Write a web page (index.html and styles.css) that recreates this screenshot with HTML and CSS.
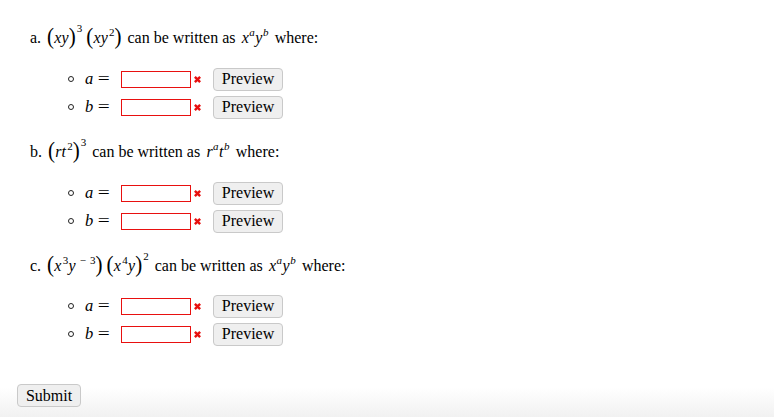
FILE: index.html
```html
<!DOCTYPE html>
<html>
<head>
<meta charset="utf-8">
<link rel="stylesheet" href="styles.css">
</head>
<body>
<div class="page">
  <div class="q">
    <div class="title">a. <span class="math"><span class="bp">(</span><i>xy</i><span class="bp">)</span><sup class="hi">3</sup> <span class="bp">(</span><i>xy</i><sup>2</sup><span class="bp">)</span></span> can be written as <span class="math tgt"><i>x</i><sup><i>a</i></sup><i>y</i><sup><i>b</i></sup></span> where:</div>
    <ul class="rows">
      <li class="row"><span class="bullet"></span><i class="var">a</i><span class="eq">=</span><input class="ans" type="text"><svg class="x" viewBox="0 0 8 8"><path d="M1 1L7 7M7 1L1 7" stroke="#e8100f" stroke-width="2.8"/></svg><button class="btn">Preview</button></li>
      <li class="row"><span class="bullet"></span><i class="var">b</i><span class="eq">=</span><input class="ans" type="text"><svg class="x" viewBox="0 0 8 8"><path d="M1 1L7 7M7 1L1 7" stroke="#e8100f" stroke-width="2.8"/></svg><button class="btn">Preview</button></li>
    </ul>
  </div>
  <div class="q">
    <div class="title">b. <span class="math"><span class="bp">(</span><i>rt</i><sup>2</sup><span class="bp">)</span><sup class="hi">3</sup></span> can be written as <span class="math tgt"><i>r</i><sup><i>a</i></sup><i>t</i><sup><i>b</i></sup></span> where:</div>
    <ul class="rows">
      <li class="row"><span class="bullet"></span><i class="var">a</i><span class="eq">=</span><input class="ans" type="text"><svg class="x" viewBox="0 0 8 8"><path d="M1 1L7 7M7 1L1 7" stroke="#e8100f" stroke-width="2.8"/></svg><button class="btn">Preview</button></li>
      <li class="row"><span class="bullet"></span><i class="var">b</i><span class="eq">=</span><input class="ans" type="text"><svg class="x" viewBox="0 0 8 8"><path d="M1 1L7 7M7 1L1 7" stroke="#e8100f" stroke-width="2.8"/></svg><button class="btn">Preview</button></li>
    </ul>
  </div>
  <div class="q">
    <div class="title">c. <span class="math"><span class="bp">(</span><i>x</i><sup>3</sup><i>y</i><sup><span class="minus">&minus;</span>3</sup><span class="bp">)</span> <span class="bp">(</span><i>x</i><sup>4</sup><i>y</i><span class="bp">)</span><sup class="hi">2</sup></span> can be written as <span class="math tgt"><i>x</i><sup><i>a</i></sup><i>y</i><sup><i>b</i></sup></span> where:</div>
    <ul class="rows rows-c">
      <li class="row"><span class="bullet"></span><i class="var">a</i><span class="eq">=</span><input class="ans" type="text"><svg class="x" viewBox="0 0 8 8"><path d="M1 1L7 7M7 1L1 7" stroke="#e8100f" stroke-width="2.8"/></svg><button class="btn">Preview</button></li>
      <li class="row"><span class="bullet"></span><i class="var">b</i><span class="eq">=</span><input class="ans" type="text"><svg class="x" viewBox="0 0 8 8"><path d="M1 1L7 7M7 1L1 7" stroke="#e8100f" stroke-width="2.8"/></svg><button class="btn">Preview</button></li>
    </ul>
  </div>
  <div class="actions"><button class="btn submit">Submit</button></div>
</div>
</body>
</html>
```
FILE: styles.css
```css
html {
  min-height: 100%;
  background: linear-gradient(to bottom, #ffffff 0, #ffffff 388px, #f1f1f1 417px);
  background-repeat: no-repeat;
  height: 417px;
}
body {
  margin: 0;
  font-family: "Liberation Serif", "Times New Roman", serif;
  font-size: 16px;
  color: #000;
}
.page {
  padding: 25px 0 0 0;
}
.title {
  height: 24px;
  line-height: 24px;
  padding-left: 30px;
  white-space: nowrap;
}
.math i {
  font-style: italic;
  margin: 0 0.25px;
}
.math {
  margin: 0 2px;
}
.bp {
  font-size: 21px;
  display: inline-block;
  transform: scaleY(1.05);
  vertical-align: -1px;
}
.math sup {
  font-size: 11px;
  vertical-align: 7px;
  line-height: 0;
  margin-left: 1px;
}
.math.tgt sup {
  margin-left: 0;
}
.math sup.hi {
  vertical-align: 11px;
  margin-left: 1px;
}
.minus {
  margin: 0 4px 0 3px;
}
.rows {
  list-style: none;
  margin: 16px 0 18px 0;
  padding: 0 0 0 68px;
}
.rows-c {
  margin-top: 15px;
}
.row {
  height: 28px;
  display: flex;
  align-items: center;
}
.bullet {
  width: 4px;
  height: 4px;
  border: 1px solid #222;
  border-radius: 50%;
  margin-right: 11px;
}
.var {
  font-style: italic;
  font-size: 16.5px;
}
.eq {
  margin: 0 6px 0 6px;
  font-size: 17px;
  display: inline-block;
  transform: scaleX(1.25);
}
.ans {
  box-sizing: border-box;
  width: 70px;
  height: 17px;
  border: 1px solid #e8100f;
  margin: 0 0 0 6px;
  padding: 0;
  background: #fff;
}
.x {
  width: 7px;
  height: 7px;
  margin: 0 12px 0 3px;
}
.btn {
  box-sizing: border-box;
  height: 23px;
  padding: 0 8px;
  font-family: "Liberation Serif", "Times New Roman", serif;
  font-size: 16px;
  color: #000;
  background: #efefef;
  border: 1px solid #c9c9c9;
  border-radius: 4px;
}
.actions {
  padding-left: 17px;
  margin-top: 36px;
}
.submit {
  width: 64px;
  padding: 0;
}
```
